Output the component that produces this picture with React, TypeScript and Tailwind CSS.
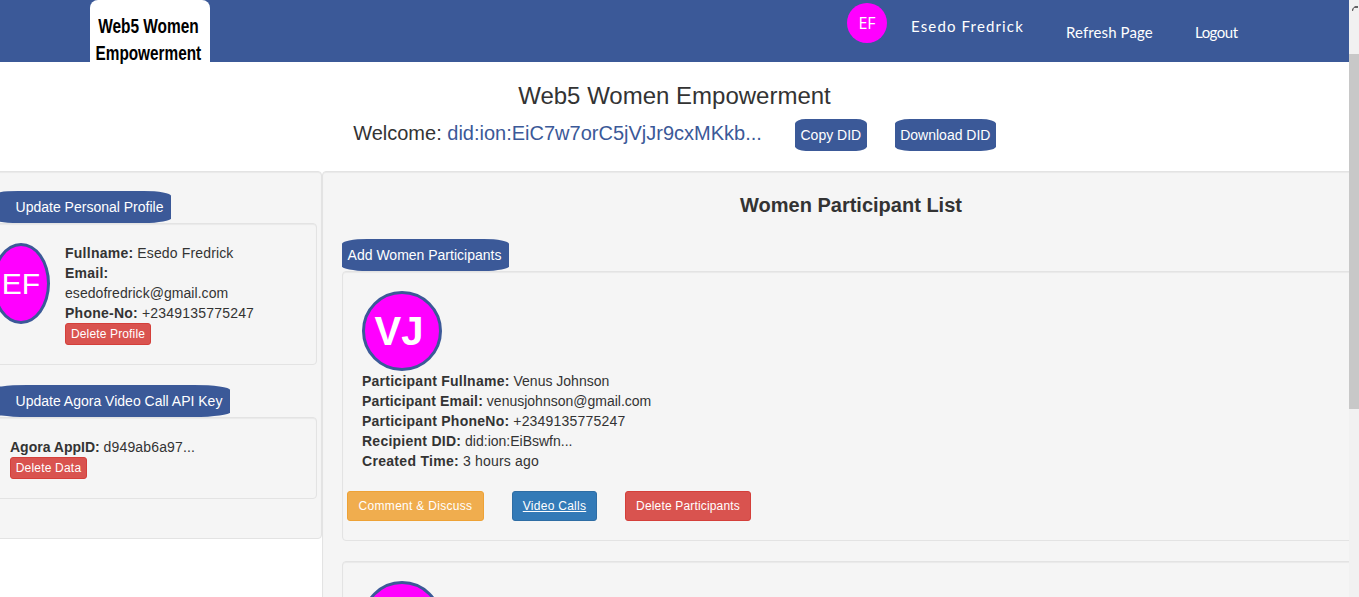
import React from 'react';

const Line = ({ label, value, labelClass = 'tracking-[0.25px]', valueClass = '' }: { label: string; value: string; labelClass?: string; valueClass?: string }) => (
  <div className="h-5">
    <b className={`font-bold ${labelClass}`}>{label}</b> <span className={valueClass}>{value}</span>
  </div>
);

const BlueButton = ({ children, className = '' }: { children: React.ReactNode; className?: string }) => (
  <button className={`h-8 shrink-0 rounded-[15%] bg-[#3b5998] text-sm whitespace-nowrap text-white ${className}`}>
    {children}
  </button>
);

const XsDanger = ({ children, className = '' }: { children: React.ReactNode; className?: string }) => (
  <button className={`block h-[22px] rounded-[3px] border border-[#d43f3a] bg-[#d9534f] text-xs text-white ${className}`}>
    {children}
  </button>
);

const SmButton = ({ children, className = '' }: { children: React.ReactNode; className?: string }) => (
  <button className={`h-[30px] shrink-0 rounded-[3px] border text-xs text-white ${className}`}>
    {children}
  </button>
);

const Well = ({ children, className = '' }: { children: React.ReactNode; className?: string }) => (
  <div className={`rounded border border-[#e3e3e3] bg-[#f5f5f5] shadow-[inset_0_1px_1px_rgba(0,0,0,0.05)] ${className}`}>
    {children}
  </div>
);

const Avatar = ({ text, className = '' }: { text?: string; className?: string }) => (
  <div className={`flex items-center justify-center rounded-[50%] border-[3px] border-[#3b5998] bg-[#ff00ff] text-white ${className}`}>
    {text}
  </div>
);

const Navbar = () => (
  <header className="flex h-[62px] shrink-0 items-start bg-[#3b5998] text-white">
    <div className="ml-[90px] flex h-[62px] w-[120px] flex-col items-center gap-[9px] rounded-t-lg bg-white pt-[17px] pr-1 text-[21px] leading-[18px] font-bold whitespace-nowrap text-black">
      <span className="inline-block scale-x-[0.735]">Web5 Women</span>
      <span className="inline-block scale-x-[0.73]">Empowerment</span>
    </div>
    <div className="mt-[3px] ml-[637px] flex h-10 w-10 items-center justify-center rounded-full bg-[#ff00ff] font-['Open_Sans',sans-serif] text-base">
      EF
    </div>
    <span className="mt-4 ml-6 w-[113px] font-['Lato',sans-serif] text-[15px] leading-5 tracking-[1.15px] whitespace-nowrap">Esedo Fredrick</span>
    <span className="mt-[22px] ml-[42px] w-[87px] font-['Lato',sans-serif] text-[15px] leading-5 tracking-[0.1px] whitespace-nowrap">Refresh Page</span>
    <span className="mt-[22px] ml-[42px] font-['Lato',sans-serif] text-[15px] leading-5 tracking-[-0.5px]">Logout</span>
  </header>
);

const Welcome = () => (
  <div className="flex h-[109px] shrink-0 flex-col items-center text-[#333]">
    <h1 className="mt-[20px] text-2xl leading-7">Web5 Women Empowerment</h1>
    <div className="mt-[9px] flex items-start">
      <p className="text-xl leading-7">
        Welcome: <span className="text-[#3b5998]">did:ion:EiC7w7orC5jVjJr9cxMKkb...</span>
      </p>
      <BlueButton className="ml-[33px] w-[72px]">Copy DID</BlueButton>
      <BlueButton className="ml-7 w-[101px]">Download DID</BlueButton>
    </div>
  </div>
);

const LeftPanel = () => (
  <Well className="-ml-2.5 h-[368px] w-[332px] shrink-0 pt-[19px] text-sm leading-5 text-[#333]">
    <BlueButton className="block w-[180px] pr-[7px] pl-[24px]">Update Personal Profile</BlueButton>
    <Well className="flex h-[142px] w-[326px] pt-[19px]">
      <Avatar text="EF" className="h-[81px] w-[58px] shrink-0 text-[30px]" />
      <div className="ml-[15px] w-[200px]">
        <Line label="Fullname:" value="Esedo Fredrick" valueClass="tracking-[0.15px]" />
        <div className="h-5 font-bold tracking-[0.25px]">Email:</div>
        <div className="h-5 tracking-[0.05px]">esedofredrick@gmail.com</div>
        <Line label="Phone-No:" value="+2349135775247" valueClass="tracking-[0.2px]" />
        <XsDanger className="w-[86px] tracking-[0.15px]">Delete Profile</XsDanger>
      </div>
    </Well>
    <BlueButton className="mt-5 block w-[239px] pr-[7px] pl-[24px]">Update Agora Video Call API Key</BlueButton>
    <Well className="h-[82px] w-[326px] pt-[19px] pl-[18px]">
      <Line label="Agora AppID:" value="d949ab6a97..." labelClass="" valueClass="tracking-[0.15px]" />
      <XsDanger className="w-[77px] tracking-[0.2px]">Delete Data</XsDanger>
    </Well>
  </Well>
);

const Participant = () => (
  <Well className="h-[270px] w-[1036px] shrink-0 pt-[19px] pl-[4px] text-sm leading-5 text-[#333]">
    <div className="pl-[15px]">
      <Avatar text="VJ" className="h-20 w-20 pr-1.5 text-[40px] font-bold" />
      <Line label="Participant Fullname:" value="Venus Johnson" />
      <Line label="Participant Email:" value="venusjohnson@gmail.com" labelClass="tracking-[0.15px]" />
      <Line label="Participant PhoneNo:" value="+2349135775247" valueClass="tracking-[0.2px]" />
      <Line label="Recipient DID:" value="did:ion:EiBswfn..." />
      <Line label="Created Time:" value="3 hours ago" labelClass="tracking-[0.3px]" valueClass="tracking-[0.2px]" />
    </div>
    <div className="mt-5 flex gap-7">
      <SmButton className="w-[137px] border-[#eea236] bg-[#f0ad4e] tracking-[0.3px]">Comment &amp; Discuss</SmButton>
      <SmButton className="w-[85px] border-[#2e6da4] bg-[#337ab7] tracking-[0.27px] underline">Video Calls</SmButton>
      <SmButton className="w-[126px] border-[#d43f3a] bg-[#d9534f] tracking-[0.16px]">Delete Participants</SmButton>
    </div>
  </Well>
);

const RightPanel = () => (
  <Well className="h-[500px] w-[1056px] shrink-0 overflow-hidden pl-[19px]">
    <h2 className="h-[67px] pt-[19px] pr-[17px] text-center text-xl leading-7 font-bold text-[#333]">Women Participant List</h2>
    <BlueButton className="block w-[167px] pr-0.5">Add Women Participants</BlueButton>
    <div className="flex flex-col gap-5">
      <Participant />
      {/* next card, only its top shows above the fold */}
      <Well className="h-[120px] w-[1036px] shrink-0 pt-[19px] pl-[19px]">
        <Avatar className="h-20 w-20" />
      </Well>
    </div>
  </Well>
);

const Scrollbar = () => (
  <div className="flex w-2.5 shrink-0 flex-col bg-[#f1f1f1]">
    <div className="h-[54px] pt-1.5 pl-[3px]">
      <svg width="6" height="5" viewBox="0 0 6 5"><path d="M0 5 L0 3 L3 0 L6 0 L6 2 L2 2 L1 5 Z" fill="#666" /></svg>
    </div>
    <div className="h-[355px] bg-[#c8c8c8]" />
  </div>
);

export default function App() {
  return (
    <div className="flex h-[597px] w-full overflow-hidden bg-white font-['Liberation_Sans',Arial,sans-serif]">
      <main className="flex w-[1349px] shrink-0 flex-col overflow-hidden">
        <Navbar />
        <Welcome />
        <section className="flex items-start">
          <LeftPanel />
          <RightPanel />
        </section>
      </main>
      <Scrollbar />
    </div>
  );
}
